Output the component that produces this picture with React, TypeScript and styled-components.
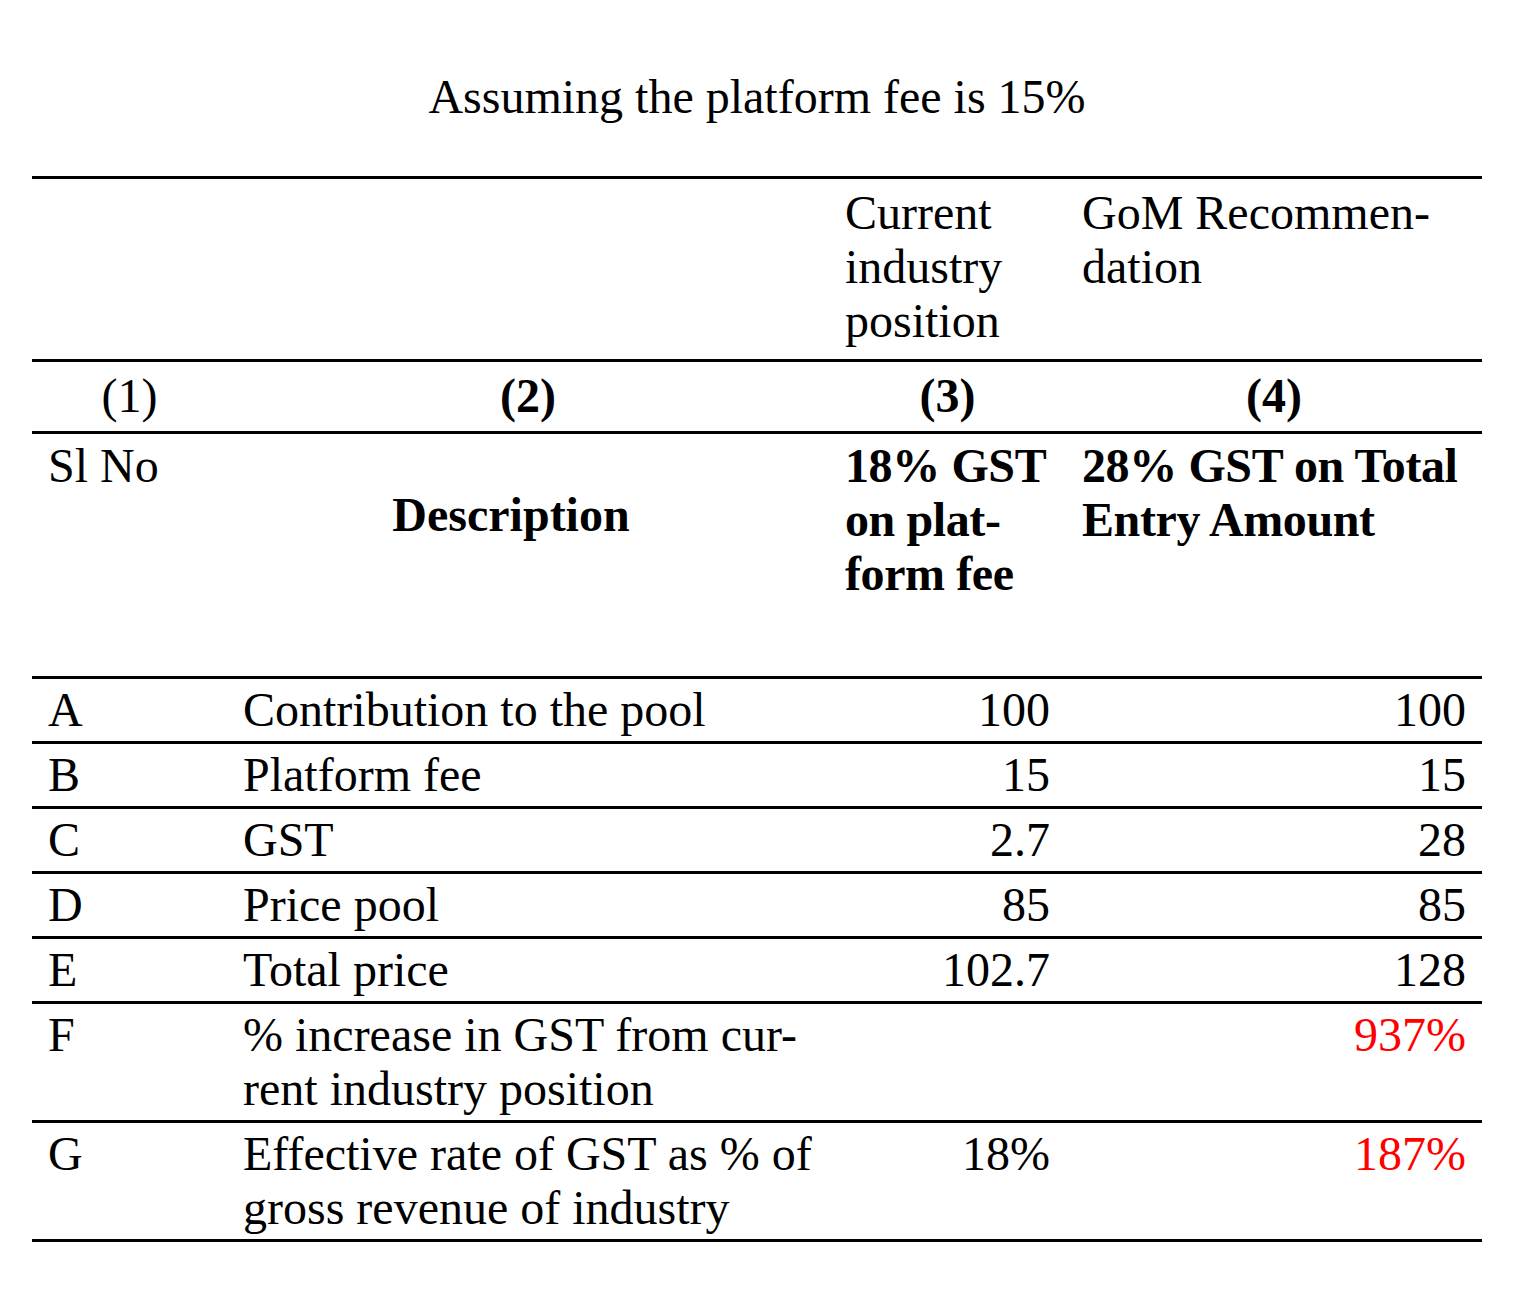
import styled, { createGlobalStyle } from "styled-components";

const GlobalStyle = createGlobalStyle`
  html, body {
    margin: 0;
    padding: 0;
    background: #ffffff;
  }
  body {
    font-family: "Liberation Serif", "Times New Roman", serif;
    color: #000000;
  }
`;

const Page = styled.div`
  width: 1536px;
  min-height: 1309px;
  padding: 70px 0 0 32px;
  box-sizing: border-box;
`;

const Caption = styled.div`
  width: 1450px;
  text-align: center;
  font-size: 48px;
  line-height: 54px;
`;

const Table = styled.table`
  margin-top: 52px;
  width: 1450px;
  border-collapse: collapse;
  table-layout: fixed;
  border-top: 3px solid #000;
  font-size: 48px;
  line-height: 54px;
`;

const Row = styled.tr`
  border-bottom: 3px solid #000;
`;

const Cell = styled.td<{ $align?: "left" | "center" | "right"; $bold?: boolean; $red?: boolean }>`
  padding: 4px 16px;
  vertical-align: top;
  white-space: nowrap;
  text-align: ${(p) => p.$align || "left"};
  font-weight: ${(p) => (p.$bold ? 700 : 400)};
  color: ${(p) => (p.$red ? "#ff0000" : "#000")};
`;

const TitleCell = styled(Cell)`
  padding-top: 7px;
  padding-bottom: 11px;
`;

const NumberCell = styled(Cell)`
  padding-top: 7px;
  padding-bottom: 8px;
`;

const HeadCell = styled(Cell)`
  padding-top: 5px;
  padding-bottom: 75px;
  letter-spacing: ${(p) => (p.$bold ? "-0.4px" : "0")};
`;

const DescriptionHead = styled(HeadCell)`
  padding-top: 54px;
  padding-right: 50px;
  letter-spacing: 0;
`;

type DataRow = {
  id: string;
  label: string[];
  current: string;
  gom: string;
  redGom?: boolean;
};

const rows: DataRow[] = [
  { id: "A", label: ["Contribution to the pool"], current: "100", gom: "100" },
  { id: "B", label: ["Platform fee"], current: "15", gom: "15" },
  { id: "C", label: ["GST"], current: "2.7", gom: "28" },
  { id: "D", label: ["Price pool"], current: "85", gom: "85" },
  { id: "E", label: ["Total price"], current: "102.7", gom: "128" },
  {
    id: "F",
    label: ["% increase in GST from cur-", "rent industry position"],
    current: "",
    gom: "937%",
    redGom: true,
  },
  {
    id: "G",
    label: ["Effective rate of GST as % of", "gross revenue of industry"],
    current: "18%",
    gom: "187%",
    redGom: true,
  },
];

function Lines({ items }: { items: string[] }) {
  return (
    <>
      {items.map((t, i) => (
        <span key={i}>
          {i > 0 && <br />}
          {t}
        </span>
      ))}
    </>
  );
}

export default function App() {
  return (
    <Page>
      <GlobalStyle />
      <Caption>Assuming the platform fee is 15%</Caption>
      <Table>
        <colgroup>
          <col style={{ width: 195 }} />
          <col style={{ width: 602 }} />
          <col style={{ width: 237 }} />
          <col style={{ width: 416 }} />
        </colgroup>
        <tbody>
          <Row>
            <TitleCell />
            <TitleCell />
            <TitleCell>
              <Lines items={["Current", "industry", "position"]} />
            </TitleCell>
            <TitleCell>
              <Lines items={["GoM Recommen-", "dation"]} />
            </TitleCell>
          </Row>
          <Row>
            <NumberCell $align="center">(1)</NumberCell>
            <NumberCell $align="center" $bold>
              (2)
            </NumberCell>
            <NumberCell $align="center" $bold>
              (3)
            </NumberCell>
            <NumberCell $align="center" $bold>
              (4)
            </NumberCell>
          </Row>
          <Row>
            <HeadCell>Sl No</HeadCell>
            <DescriptionHead $align="center" $bold>
              Description
            </DescriptionHead>
            <HeadCell $bold>
              <Lines items={["18% GST", "on plat-", "form fee"]} />
            </HeadCell>
            <HeadCell $bold>
              <Lines items={["28% GST on Total", "Entry Amount"]} />
            </HeadCell>
          </Row>
          {rows.map((r) => (
            <Row key={r.id}>
              <Cell>{r.id}</Cell>
              <Cell>
                <Lines items={r.label} />
              </Cell>
              <Cell $align="right">{r.current}</Cell>
              <Cell $align="right" $red={r.redGom}>
                {r.gom}
              </Cell>
            </Row>
          ))}
        </tbody>
      </Table>
    </Page>
  );
}
